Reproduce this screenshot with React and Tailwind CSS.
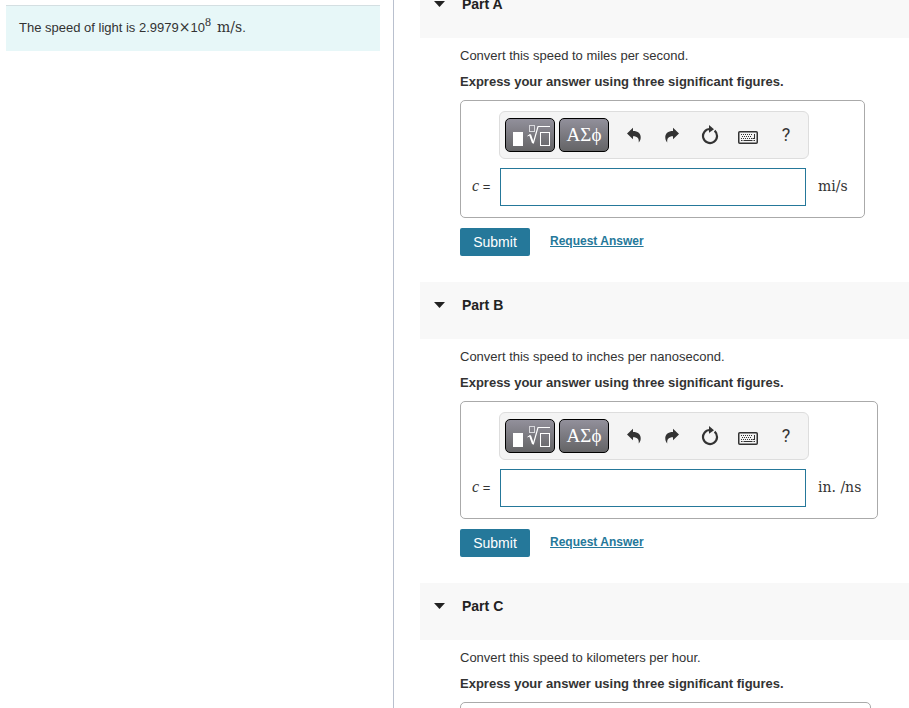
import React from "react";

const parts = [
  { id: "A", task: "Convert this speed to miles per second.", unit: "mi/s" },
  { id: "B", task: "Convert this speed to inches per nanosecond.", unit: "in. /ns" },
  { id: "C", task: "Convert this speed to kilometers per hour.", unit: "km/h" },
];

function TemplateIcon() {
  return (
    <svg width="40" height="24" viewBox="0 0 40 24" fill="none" stroke="#fff" aria-hidden="true">
      <rect x="3" y="9" width="10" height="14" fill="#fff" stroke="none" />
      <rect x="19.5" y="2.500" width="5" height="6" stroke="#d8d8dc" />
      <path d="M17.500 13l2.700-1.500" />
      <path d="M20 11.500l3 8.500" strokeWidth="2" />
      <path d="M23.200 20.500L28 3.500H40" strokeWidth="1.200" />
      <rect x="30.500" y="9.500" width="9" height="13" />
    </svg>
  );
}

function UndoIcon({ flipped }) {
  return (
    <svg width="14" height="16" viewBox="0 0 14 16" fill="#333" className={flipped ? "-scale-x-100" : ""} aria-hidden="true">
      <path d="M0 6.500L6 .8V4c5 0 8 2.600 7.700 6.800-.1 2-.8 3.400-2 4.700.6-4-1-6.300-5.700-6.300v3z" />
    </svg>
  );
}

function ResetIcon() {
  return (
    <svg width="18" height="20" viewBox="0 0 18 20" fill="none" aria-hidden="true">
      <path d="M13.600 5.700A7 7 0 1 1 9 4" stroke="#333" strokeWidth="2.200" />
      <path d="M8 0l5 4.300-5 3.400z" fill="#333" />
    </svg>
  );
}

function KeyboardIcon() {
  return (
    <svg width="20" height="13" viewBox="0 0 20 13" fill="none" stroke="#333" aria-hidden="true">
      <rect x=".75" y=".75" width="18.500" height="11.500" rx="1" strokeWidth="1.500" />
      <path d="M3 3.500h12M4 5.500h10M3 7.500h11" strokeDasharray="1 1" />
      <path d="M16.500 3v4M14.500 7.500h2.500" />
      <path d="M3 9.500h1.500M5.500 9.500h9M15.500 9.500H17" />
    </svg>
  );
}

const darkButton =
  "flex h-[34px] w-[50px] shrink-0 items-center justify-center rounded-[5px] border border-black bg-linear-to-b from-[#92909b] to-[#646466] text-white";
const toolButton = "flex h-[34px] w-[38px] shrink-0 items-center justify-center text-[#333]";

function Toolbar() {
  return (
    <div className="ml-[38px] flex h-12 w-[310px] rounded-md border border-[#ddd] bg-[#f4f4f4] px-[5px] py-[6px]">
      <button type="button" aria-label="Templates" className={darkButton}>
        <TemplateIcon />
      </button>
      <button
        type="button"
        aria-label="Symbols"
        className={darkButton + " ml-1 font-['Liberation_Serif',serif] text-[19px] leading-6"}
      >
        ΑΣϕ
      </button>
      <div className="ml-[6px] flex">
        <button type="button" aria-label="Undo" className={toolButton}>
          <UndoIcon />
        </button>
        <button type="button" aria-label="Redo" className={toolButton}>
          <UndoIcon flipped />
        </button>
        <button type="button" aria-label="Reset" className={toolButton}>
          <ResetIcon />
        </button>
        <button type="button" aria-label="Keyboard shortcuts" className={toolButton + " pt-1"}>
          <KeyboardIcon />
        </button>
        <button type="button" aria-label="Help" className={toolButton + " font-['Roboto',sans-serif] text-lg"}>
          ?
        </button>
      </div>
    </div>
  );
}

function Part({ id, task, unit }) {
  return (
    <section>
      <h2 className="flex h-[57px] items-start bg-[#f8f8f8] pt-[13px]">
        <button type="button" className="flex h-5 items-center pl-[14px] text-sm font-bold text-[#222]">
          <svg width="11" height="6" viewBox="0 0 11 6" fill="#222" aria-hidden="true">
            <path d="M0 0h11L5.500 6z" />
          </svg>
          <span className="ml-[17px]">Part {id}</span>
        </button>
      </h2>
      <div className="px-10 pt-2 pb-[26px]">
        <p className="h-5 text-[13px] leading-5">{task}</p>
        <p className="mt-[6px] h-5 text-[13px] leading-5 font-bold">Express your answer using three significant figures.</p>
        <div className="mt-2 inline-block rounded-[5px] border border-[#aaa] pt-[10px] pr-4 pb-[11px] align-top whitespace-nowrap">
          <Toolbar />
          <div className="mt-[9px] flex items-center">
            <label htmlFor={"answer-" + id} className="w-[39px] shrink-0 pb-[2px] pl-[11px] text-[13px]">
              <i className="font-['Liberation_Serif',serif] text-base">c</i> =
            </label>
            <input
              id={"answer-" + id}
              type="text"
              className="h-[38px] w-[306px] shrink-0 border border-[#25789a] bg-white px-2 outline-none"
            />
            <span className="ml-3 pb-[2px] font-['DejaVu_Serif',serif] text-sm leading-5">{unit}</span>
          </div>
        </div>
        <div className="mt-[10px] flex items-start">
          <button type="button" className="h-7 w-[70px] rounded-[2px] bg-[#25789a] text-sm text-white">
            Submit
          </button>
          <a href="#answer" className="ml-5 pt-1 text-xs leading-[18px] font-bold text-[#25789a] underline">
            Request Answer
          </a>
        </div>
      </div>
    </section>
  );
}

export default function App() {
  return (
    <div className="flex h-screen overflow-hidden bg-white font-['Liberation_Sans',Arial,sans-serif] text-[#333]">
      <aside className="w-[394px] shrink-0 border-r border-[#b9c0ce] py-[5px] pr-[13px] pl-[6px]">
        <p className="h-[46px] border-t border-[#d4dfe2] bg-[#e7f7f8] px-[13px] pt-3 text-[13px] leading-5">
          The speed of light is 2.9979
          <span className="font-['DejaVu_Serif',serif] text-sm leading-none">×</span>
          10
          <sup className="font-['Liberation_Serif',serif] text-xs leading-none">8</sup>
          <span className="ml-[6px] font-['DejaVu_Serif',serif] text-sm leading-none">m/s</span>.
        </p>
      </aside>
      <main className="min-w-0 grow overflow-hidden pl-[26px]">
        <div className="-mt-[19px]">
          {parts.map((part) => (
            <Part key={part.id} {...part} />
          ))}
        </div>
      </main>
    </div>
  );
}
